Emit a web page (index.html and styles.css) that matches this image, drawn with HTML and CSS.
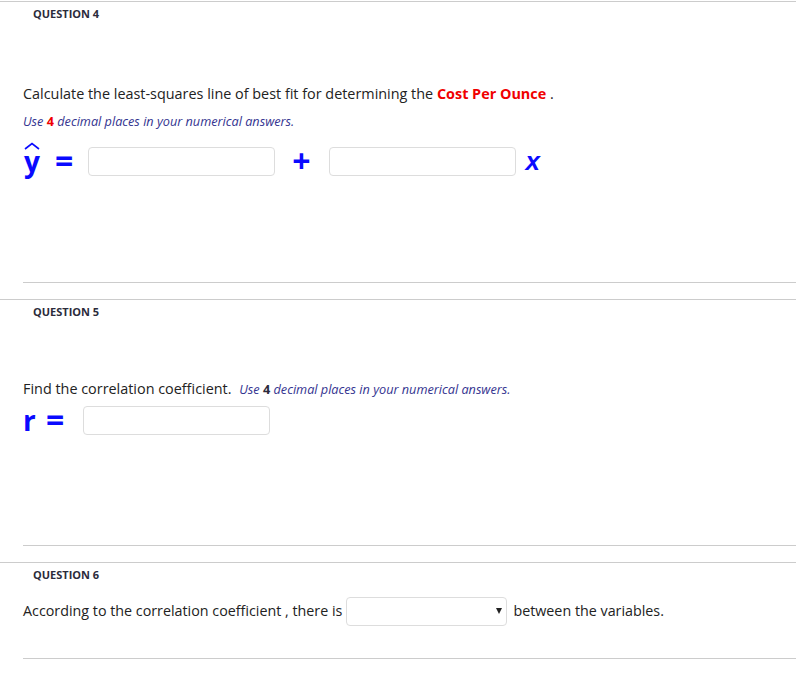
FILE: index.html
```html
<!DOCTYPE html>
<html lang="en">
<head>
    <meta charset="UTF-8">
    <meta name="viewport" content="width=device-width, initial-scale=1.0">
    <title>Questions</title>
    <link rel="stylesheet" href="styles.css">
</head>
<body>
    <div class="question q4">
        <div class="q-head">QUESTION 4</div>
        <div class="q-body">
            <p class="prompt">Calculate the least-squares line of best fit for determining the <span class="hl">Cost Per Ounce</span> .</p>
            <p class="hint">Use <b class="red">4</b> decimal places in your numerical answers.</p>
            <div class="math">
                <span class="yhat">
                    <svg class="hat" width="18" height="8" viewBox="0 0 18 8"><polyline points="2,7 9,1.5 16,7" fill="none" stroke="#0a0aff" stroke-width="1.6"/></svg>
                    <span class="sym">y</span>
                </span>
                <span class="sym eq">=</span>
                <input type="text" class="answer">
                <span class="sym plus">+</span>
                <input type="text" class="answer">
                <span class="sym var">x</span>
            </div>
        </div>
        <div class="rule"></div>
    </div>

    <div class="question q5">
        <div class="q-head">QUESTION 5</div>
        <div class="q-body">
            <p class="prompt">Find the correlation coefficient. <span class="hint inline">Use <b>4</b> decimal places in your numerical answers.</span></p>
            <div class="math">
                <span class="sym r">r</span>
                <span class="sym eq">=</span>
                <input type="text" class="answer">
            </div>
        </div>
        <div class="rule"></div>
    </div>

    <div class="question q6">
        <div class="q-head">QUESTION 6</div>
        <div class="q-body">
            <p class="sentence">According to the correlation coefficient , there is
                <span class="select"><span class="arrow"></span></span>
                between the variables.</p>
        </div>
        <div class="rule"></div>
    </div>
</body>
</html>
```

FILE: styles.css
```css
body {
    font-family: 'Open Sans', 'Liberation Sans', sans-serif;
    background-color: #fff;
    color: #222;
    margin: 0;
    padding: 1px 0 0 0;
}

p {
    margin: 0;
}

.question {
    border-top: 1px solid #ccc;
}

.q-head {
    padding-left: 33px;
    margin-top: 4px;
    font-size: 11px;
    line-height: 16px;
    font-weight: bold;
    color: #2b2b3b;
}

.q-body {
    padding-left: 23px;
}

.prompt {
    font-size: 14.4px;
    line-height: 20px;
    color: #222;
}

.hl {
    color: #f00000;
    font-weight: bold;
}

.hint {
    font-size: 12.7px;
    line-height: 18px;
    font-style: italic;
    color: #343490;
}

.hint.inline {
    margin-left: 4px;
}

.hint b {
    font-style: normal;
    color: #2b2b3b;
}

.hint b.red {
    color: #f00000;
}

.math {
    display: flex;
    align-items: center;
    height: 36px;
}

.sym {
    color: #0a0aff;
    font-size: 28px;
    line-height: 28px;
    font-weight: bold;
}

.yhat {
    display: flex;
    flex-direction: column;
    align-items: center;
    width: 18px;
}

.hat {
    display: block;
    margin-top: -6px;
}

.yhat .sym {
    margin-top: -3px;
}

.eq {
    font-size: 32px;
    margin-left: 14px;
    margin-right: 15px;
}

.answer {
    box-sizing: border-box;
    width: 187px;
    height: 29px;
    border: 1px solid #ddd;
    border-radius: 4px;
    background: #fff;
    margin: 0;
}

.plus {
    margin-left: 17px;
    margin-right: 18px;
    font-size: 32px;
}

.var {
    margin-left: 10px;
    font-family: 'Liberation Sans', sans-serif;
    font-style: italic;
    font-size: 26px;
}

.r {
    width: 12px;
}

.q5 .eq {
    margin-left: 11px;
    margin-right: 19px;
}

.rule {
    margin-left: 23px;
    border-top: 1px solid #ccc;
}

/* question 4 spacing */
.q4 .prompt {
    margin-top: 62px;
}

.q4 .hint {
    margin-top: 8px;
}

.q4 .math {
    margin-top: 13px;
}

.q4 .rule {
    margin-top: 103px;
    margin-bottom: 16px;
}

/* question 5 spacing */
.q5 .prompt {
    margin-top: 59px;
}

.q5 .math {
    margin-top: 3px;
}

.q5 .rule {
    margin-top: 107px;
    margin-bottom: 16px;
}

/* question 6 */
.sentence {
    font-size: 14.3px;
    line-height: 30px;
    margin-top: 13px;
    display: flex;
    align-items: center;
    gap: 4px;
}

.select {
    box-sizing: border-box;
    width: 161px;
    height: 29px;
    border: 1px solid #ddd;
    border-radius: 4px;
    display: flex;
    align-items: center;
    justify-content: flex-end;
    padding-right: 4px;
    margin: 0 2px 0 0;
}

.arrow {
    width: 0;
    height: 0;
    border-left: 3.5px solid transparent;
    border-right: 3.5px solid transparent;
    border-top: 6px solid #222;
}

.q6 .rule {
    margin-top: 32px;
}
```
